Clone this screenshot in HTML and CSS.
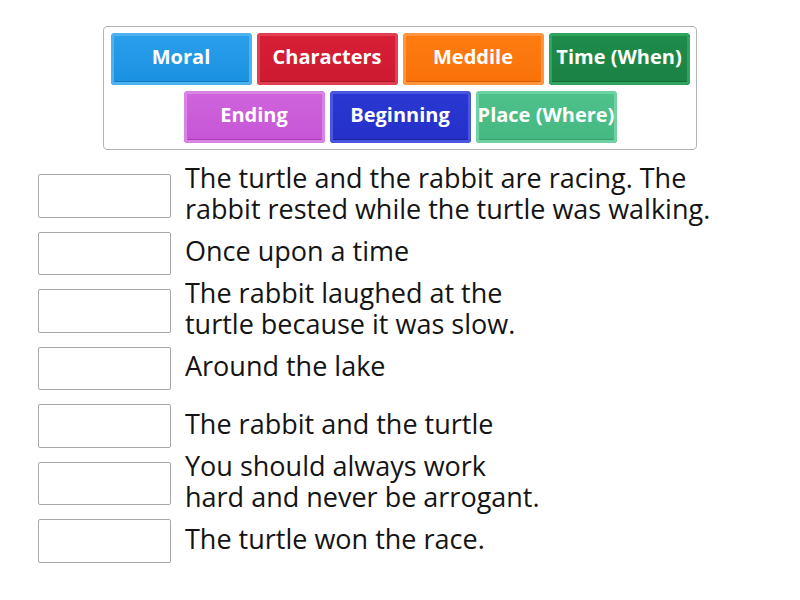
FILE: index.html
```html
<!DOCTYPE html>
<html>
<head>
<meta charset="utf-8">
<link rel="stylesheet" href="styles.css">
</head>
<body>
<div class="page">
  <div class="bank">
    <div class="bank-row">
      <div class="tile c-blue">Moral</div>
      <div class="tile c-red">Characters</div>
      <div class="tile c-orange">Meddile</div>
      <div class="tile c-green">Time (When)</div>
    </div>
    <div class="bank-row">
      <div class="tile c-pink">Ending</div>
      <div class="tile c-navy">Beginning</div>
      <div class="tile c-mint">Place (Where)</div>
    </div>
  </div>
  <div class="items">
    <div class="item"><div class="slot"></div><div class="label">The turtle and the rabbit are racing. The<br>rabbit rested while the turtle was walking.</div></div>
    <div class="item"><div class="slot"></div><div class="label">Once upon a time</div></div>
    <div class="item"><div class="slot"></div><div class="label">The rabbit laughed at the<br>turtle because it was slow.</div></div>
    <div class="item"><div class="slot"></div><div class="label">Around the lake</div></div>
    <div class="item"><div class="slot"></div><div class="label">The rabbit and the turtle</div></div>
    <div class="item"><div class="slot"></div><div class="label">You should always work<br>hard and never be arrogant.</div></div>
    <div class="item"><div class="slot"></div><div class="label">The turtle won the race.</div></div>
  </div>
</div>
</body>
</html>
```

FILE: styles.css
```css
* { box-sizing: border-box; }
html, body { margin: 0; padding: 0; background: #fff; }
body { font-family: "Open Sans", "Liberation Sans", sans-serif; }
.page { width: 800px; height: 600px; padding-top: 26px; }
.bank {
  width: 594px;
  margin-left: 103px;
  border: 1px solid #b4b4b4;
  border-radius: 4px;
  padding: 6px;
  display: flex;
  flex-direction: column;
  gap: 6px;
}
.bank-row { display: flex; justify-content: center; gap: 5px; }
.tile {
  width: 141px;
  height: 52px;
  border-radius: 4px;
  color: #fff;
  font-weight: 700;
  font-size: 20px;
  display: flex;
  align-items: center;
  justify-content: center;
  padding-bottom: 5px;
  white-space: nowrap;
}
.c-blue { background: linear-gradient(#2ba0ec, #1990e0); box-shadow: inset 0 0 0 3px #4eb2f0, inset 0 -4px 0 0 #1479c4; }
.c-red { background: linear-gradient(#d81f36, #cc1a30); box-shadow: inset 0 0 0 3px #e23f52, inset 0 -4px 0 0 #a81426; }
.c-orange { background: linear-gradient(#ff7d12, #f87108); box-shadow: inset 0 0 0 3px #ff953e, inset 0 -4px 0 0 #d65e00; }
.c-green { background: linear-gradient(#1e8c4a, #1b8244); box-shadow: inset 0 0 0 3px #2ea45e, inset 0 -4px 0 0 #156b37; }
.c-pink { background: linear-gradient(#cf64dc, #c655d6); box-shadow: inset 0 0 0 3px #d983e4, inset 0 -4px 0 0 #a83db8; }
.c-navy { background: linear-gradient(#2a37d2, #2430c8); box-shadow: inset 0 0 0 3px #4856e0, inset 0 -4px 0 0 #1a23a4; }
.c-mint { background: linear-gradient(#4fc28c, #45b881); box-shadow: inset 0 0 0 3px #6fd2a2, inset 0 -4px 0 0 #37a06c; }
.items { margin-top: 24px; display: flex; flex-direction: column; gap: 14px; padding-left: 38px; }
.item { display: flex; align-items: center; height: 43.5px; gap: 14px; }
.slot {
  width: 133px;
  height: 43.5px;
  border: 1px solid #a8a8a8;
  border-radius: 2px;
  flex: none;
}
.label { font-size: 27px; line-height: 31px; color: #141414; padding-bottom: 5px; }
```
